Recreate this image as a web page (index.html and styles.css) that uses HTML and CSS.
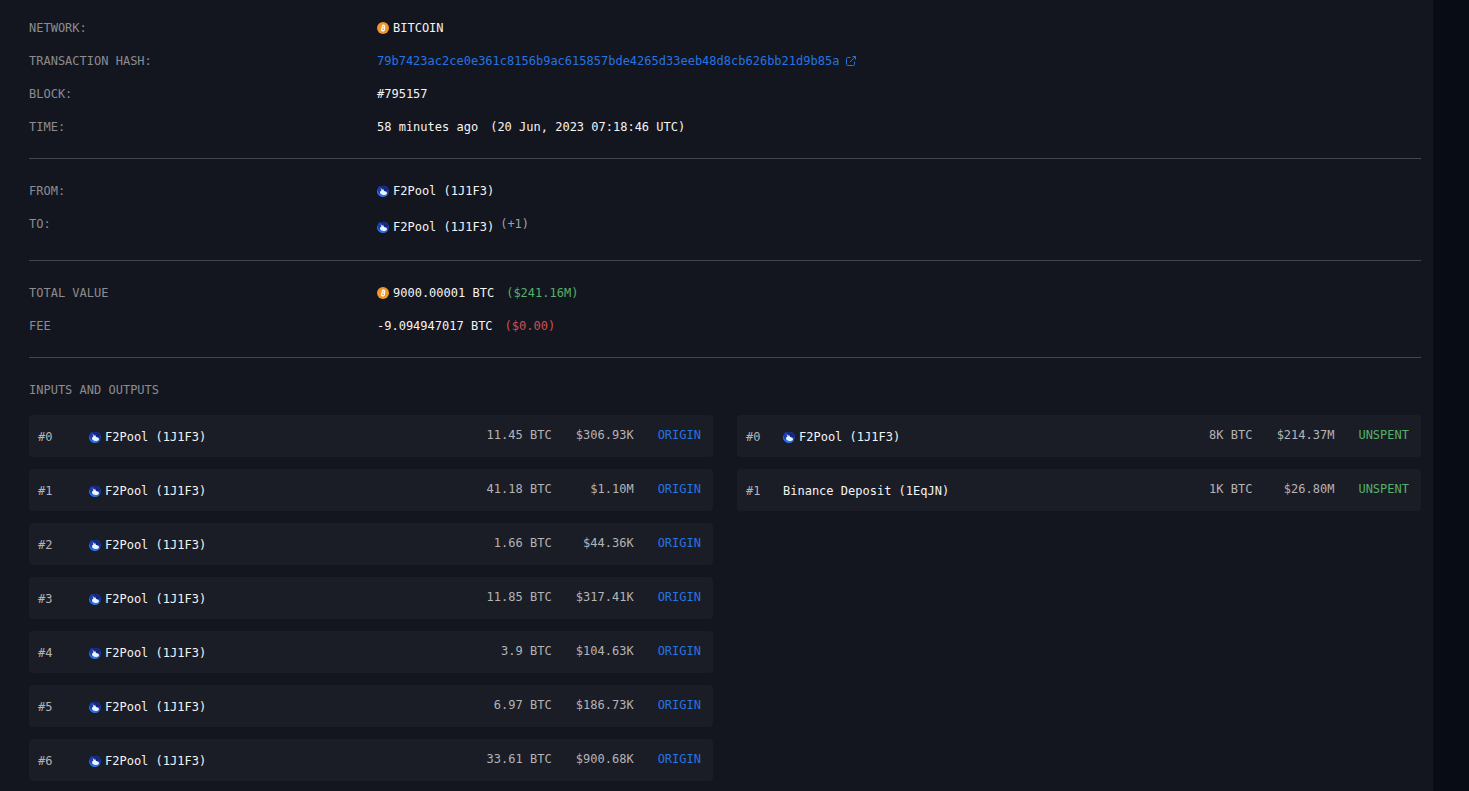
FILE: index.html
```html
<!DOCTYPE html>
<html lang="en">
<head>
  <meta charset="UTF-8">
  <meta name="viewport" content="width=device-width, initial-scale=1.0">
  <title>Transaction</title>
  <link rel="stylesheet" href="styles.css">
</head>
<body>
  <!-- shared icons -->
  <svg class="sprite" aria-hidden="true">
    <symbol id="btc" viewBox="0 0 24 24">
      <circle cx="12" cy="12" r="12" fill="#f0962a"/>
      <g transform="rotate(14 12 12)" fill="none" stroke="#fff" stroke-width="2">
        <path d="M8.500 7.500h4.500a2.200 2.200 0 0 1 0 4.400H10M10 12h3.500a2.300 2.300 0 0 1 0 4.600h-5M10 7.500v9M11 5v2.500M14 5v2.500M11 16.500V19M14 16.500V19"/>
      </g>
    </symbol>
    <symbol id="f2pool" viewBox="0 0 24 24">
      <path d="M3 3l3-1 2 2c3-3 8-3 11-1 3 2 5 5 5 9a12 12 0 0 1-24 0c0-3 1-5 3-7z" fill="#1a3db0"/>
      <path d="M1 9c0 6 5 11 11 11 4 0 8-1 11-4-2 5-6 8-11 8C6 24 0 19 0 12z" fill="#2475e6"/>
      <path d="M10 3c6-2 12 2 13 8l-7 1-5-3z" fill="#15257a"/>
      <path d="M7 6l4 4 1-3 2 5c3 0 6 2 6 4 0 3-3 4-7 4-4 0-7-2-7-5 0-2 1-3 3-4z" fill="#eef5ff"/>
    </symbol>
  </svg>

  <main class="panel">
    <dl class="section">
      <dt>NETWORK:</dt>
      <dd><svg class="icon"><use href="#btc"/></svg>BITCOIN</dd>
      <dt>TRANSACTION HASH:</dt>
      <dd>
        <a class="link hash" href="#">79b7423ac2ce0e361c8156b9ac615857bde4265d33eeb48d8cb626bb21d9b85a
          <svg class="icon" viewBox="0 0 12 12" fill="none" stroke="currentColor"><path d="M5.500 2.500h-3a1 1 0 0 0-1 1v6a1 1 0 0 0 1 1h6a1 1 0 0 0 1-1v-3M7.500 1.500h3v3M10.500 1.500l-5.500 5.500"/></svg>
        </a>
      </dd>
      <dt>BLOCK:</dt>
      <dd>#795157</dd>
      <dt>TIME:</dt>
      <dd>58 minutes ago <span class="note">(20 Jun, 2023 07:18:46 UTC)</span></dd>
    </dl>

    <dl class="section">
      <dt>FROM:</dt>
      <dd><svg class="icon"><use href="#f2pool"/></svg>F2Pool (1J1F3)</dd>
      <dt>TO:</dt>
      <dd class="to">
        <span class="entity"><svg class="icon"><use href="#f2pool"/></svg>F2Pool (1J1F3)</span>
        <span class="more">(+1)</span>
      </dd>
    </dl>

    <dl class="section">
      <dt>TOTAL VALUE</dt>
      <dd><svg class="icon"><use href="#btc"/></svg>9000.00001 BTC <span class="note green">($241.16M)</span></dd>
      <dt>FEE</dt>
      <dd>-9.094947017 BTC <span class="note red">($0.00)</span></dd>
    </dl>

    <h2>INPUTS AND OUTPUTS</h2>
    <div class="transfers">
      <ul class="inputs">
        <li>
          <span class="index">#0</span>
          <span class="entity"><svg class="icon"><use href="#f2pool"/></svg>F2Pool (1J1F3)</span>
          <span class="amounts"><span>11.45 BTC</span><span class="usd">$306.93K</span><a class="link" href="#">ORIGIN</a></span>
        </li>
        <li>
          <span class="index">#1</span>
          <span class="entity"><svg class="icon"><use href="#f2pool"/></svg>F2Pool (1J1F3)</span>
          <span class="amounts"><span>41.18 BTC</span><span class="usd">$1.10M</span><a class="link" href="#">ORIGIN</a></span>
        </li>
        <li>
          <span class="index">#2</span>
          <span class="entity"><svg class="icon"><use href="#f2pool"/></svg>F2Pool (1J1F3)</span>
          <span class="amounts"><span>1.66 BTC</span><span class="usd">$44.36K</span><a class="link" href="#">ORIGIN</a></span>
        </li>
        <li>
          <span class="index">#3</span>
          <span class="entity"><svg class="icon"><use href="#f2pool"/></svg>F2Pool (1J1F3)</span>
          <span class="amounts"><span>11.85 BTC</span><span class="usd">$317.41K</span><a class="link" href="#">ORIGIN</a></span>
        </li>
        <li>
          <span class="index">#4</span>
          <span class="entity"><svg class="icon"><use href="#f2pool"/></svg>F2Pool (1J1F3)</span>
          <span class="amounts"><span>3.9 BTC</span><span class="usd">$104.63K</span><a class="link" href="#">ORIGIN</a></span>
        </li>
        <li>
          <span class="index">#5</span>
          <span class="entity"><svg class="icon"><use href="#f2pool"/></svg>F2Pool (1J1F3)</span>
          <span class="amounts"><span>6.97 BTC</span><span class="usd">$186.73K</span><a class="link" href="#">ORIGIN</a></span>
        </li>
        <li>
          <span class="index">#6</span>
          <span class="entity"><svg class="icon"><use href="#f2pool"/></svg>F2Pool (1J1F3)</span>
          <span class="amounts"><span>33.61 BTC</span><span class="usd">$900.68K</span><a class="link" href="#">ORIGIN</a></span>
        </li>
      </ul>
      <ul class="outputs">
        <li>
          <span class="index">#0</span>
          <span class="entity"><svg class="icon"><use href="#f2pool"/></svg>F2Pool (1J1F3)</span>
          <span class="amounts"><span>8K BTC</span><span class="usd">$214.37M</span><span class="green">UNSPENT</span></span>
        </li>
        <li>
          <span class="index">#1</span>
          <span class="entity">Binance Deposit (1EqJN)</span>
          <span class="amounts"><span>1K BTC</span><span class="usd">$26.80M</span><span class="green">UNSPENT</span></span>
        </li>
      </ul>
    </div>
  </main>
</body>
</html>
```
FILE: styles.css
```css
* {
  box-sizing: border-box;
}
body {
  margin: 0;
  background-color: #080c14;
  color: #a0a0a4;
  font-family: "DejaVu Sans Mono", "Liberation Mono", monospace;
  font-size: 12px;
  line-height: 18px;
}
.sprite {
  display: none;
}
.panel {
  min-height: 100vh;
  margin-right: 36px;
  padding: 19px 12px 10px 29px;
  background-color: #14161f;
}
.section {
  display: grid;
  grid-template-columns: 25% 1fr;
  row-gap: 15px;
  margin: 0 0 23px;
  padding-bottom: 22px;
  border-bottom: 1px solid #44464c;
}
dt {
  color: #8b8c91;
}
dd {
  display: flex;
  align-items: center;
  margin: 0;
  color: #f4f4f4;
}
.icon {
  width: 12px;
  height: 12px;
  margin-right: 4px;
  flex-shrink: 0;
}
.link {
  color: #2574e4;
  text-decoration: none;
}
.link:hover {
  text-decoration: underline;
}
.hash {
  display: flex;
  align-items: center;
  gap: 6px;
}
.note {
  margin-left: 12px;
}
.entity {
  display: flex;
  align-items: center;
  color: #f4f4f4;
}
.to {
  align-items: flex-start;
}
.to .entity {
  padding: 3px 0 2px;
}
.more {
  margin-left: 6px;
  color: #a0a0a4;
}
.green {
  color: #55b068;
}
.red {
  color: #d04f50;
}
h2 {
  margin: 0 0 16px;
  color: #8b8c91;
  font-size: 12px;
  font-weight: normal;
}
.transfers {
  display: grid;
  grid-template-columns: 1fr 1fr;
  align-items: start;
  gap: 24px;
}
ul {
  display: grid;
  gap: 12px;
  margin: 0;
  padding: 0;
  list-style: none;
}
li {
  display: flex;
  align-items: center;
  padding: 12px 12px 12px 9px;
  border-radius: 4px;
  background-color: #1b1d26;
  color: #b4b4b6;
}
.index {
  width: 51px;
}
.outputs .index {
  width: 37px;
}
.index,
li .entity {
  padding-top: 2px;
  line-height: 16px;
}
.amounts {
  display: flex;
  gap: 24px;
  margin-left: auto;
  padding-bottom: 2px;
  line-height: 16px;
}
.usd {
  width: 58px;
  text-align: right;
}
```
